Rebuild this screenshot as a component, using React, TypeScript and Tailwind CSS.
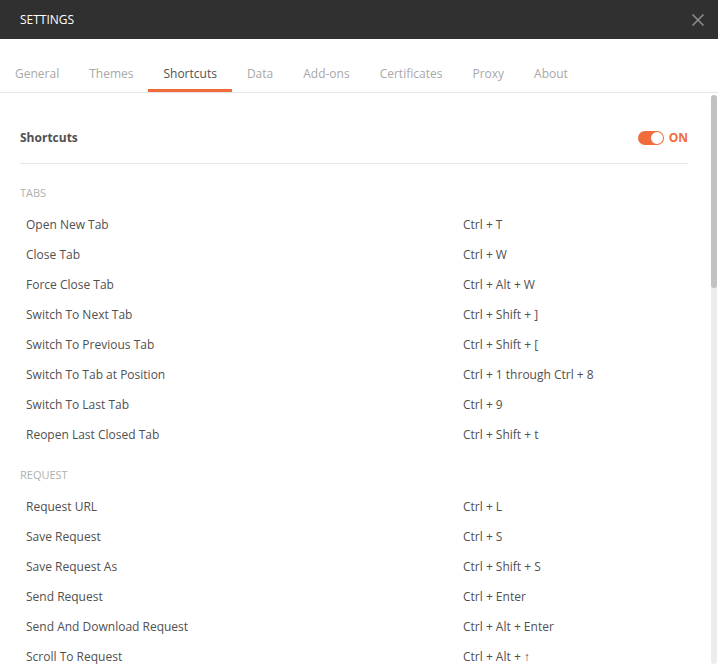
import { X } from "lucide-react"

const tabs = [
  "General",
  "Themes",
  "Shortcuts",
  "Data",
  "Add-ons",
  "Certificates",
  "Proxy",
  "About",
]

const sections = [
  {
    title: "TABS",
    rows: [
      ["Open New Tab", "Ctrl + T"],
      ["Close Tab", "Ctrl + W"],
      ["Force Close Tab", "Ctrl + Alt + W"],
      ["Switch To Next Tab", "Ctrl + Shift + ]"],
      ["Switch To Previous Tab", "Ctrl + Shift + ["],
      ["Switch To Tab at Position", "Ctrl + 1 through Ctrl + 8"],
      ["Switch To Last Tab", "Ctrl + 9"],
      ["Reopen Last Closed Tab", "Ctrl + Shift + t"],
    ],
  },
  {
    title: "REQUEST",
    rows: [
      ["Request URL", "Ctrl + L"],
      ["Save Request", "Ctrl + S"],
      ["Save Request As", "Ctrl + Shift + S"],
      ["Send Request", "Ctrl + Enter"],
      ["Send And Download Request", "Ctrl + Alt + Enter"],
      ["Scroll To Request", "Ctrl + Alt + ↑"],
    ],
  },
]

export default function App() {
  return (
    <div className="flex h-[667px] w-[718px] flex-col overflow-hidden bg-white font-['Open_Sans',sans-serif] text-[12px] text-[#505050]">
      <div className="flex h-[39px] shrink-0 items-center justify-between bg-[#303030] pl-5 pr-[10px]">
        <span className="text-[12px] text-white">SETTINGS</span>
        <X className="h-[20px] w-[20px] text-[#8a8a8a]" strokeWidth={2} />
      </div>

      <div className="flex h-[54px] shrink-0 border-b border-[#e6e6e6]">
        {tabs.map((tab) => (
          <div
            key={tab}
            className={
              tab === "Shortcuts"
                ? "h-[53px] border-b-[3px] border-[#f26b3a] px-[15px] pt-[25px] leading-[20px] text-[#505050]"
                : "h-[53px] border-b-[3px] border-transparent px-[15px] pt-[25px] leading-[20px] text-[#a8a8a8]"
            }
          >
            {tab}
          </div>
        ))}
      </div>

      <div className="flex min-h-0 flex-1">
        <div className="flex-1 overflow-hidden px-5 pt-[25px]">
          <div className="flex h-[40px] items-center justify-between">
            <span className="font-bold">Shortcuts</span>
            <div className="flex items-center gap-[5px]">
              <div className="flex h-[14px] w-[26px] items-center justify-end rounded-full bg-[#f26b3a] pr-[1px]">
                <div className="h-[12px] w-[12px] rounded-full bg-white" />
              </div>
              <span className="text-[12px] font-bold text-[#f26b3a]">ON</span>
            </div>
          </div>
          <div className="mt-[5px] h-px bg-[#e6e6e6]" />

          {sections.map((section, i) => (
            <div key={section.title} className={i === 0 ? "mt-[21px]" : "mt-[17px]"}>
              <div className="h-[16px] text-[11px] leading-[16px] text-[#b0b0b0]">
                {section.title}
              </div>
              <div className="mt-[9px]">
                {section.rows.map(([name, keys]) => (
                  <div key={name} className="grid h-[30px] grid-cols-[437px_1fr] items-center pl-[6px]">
                    <span>{name}</span>
                    <span>{keys}</span>
                  </div>
                ))}
              </div>
            </div>
          ))}
        </div>

        <div className="w-[10px] shrink-0 pb-[3px] pl-[3px] pr-[1px] pt-[2px]">
          <div className="h-full rounded-full bg-[#ececec]">
            <div className="h-[193px] rounded-full bg-[#c1c1c1]" />
          </div>
        </div>
      </div>
    </div>
  )
}
